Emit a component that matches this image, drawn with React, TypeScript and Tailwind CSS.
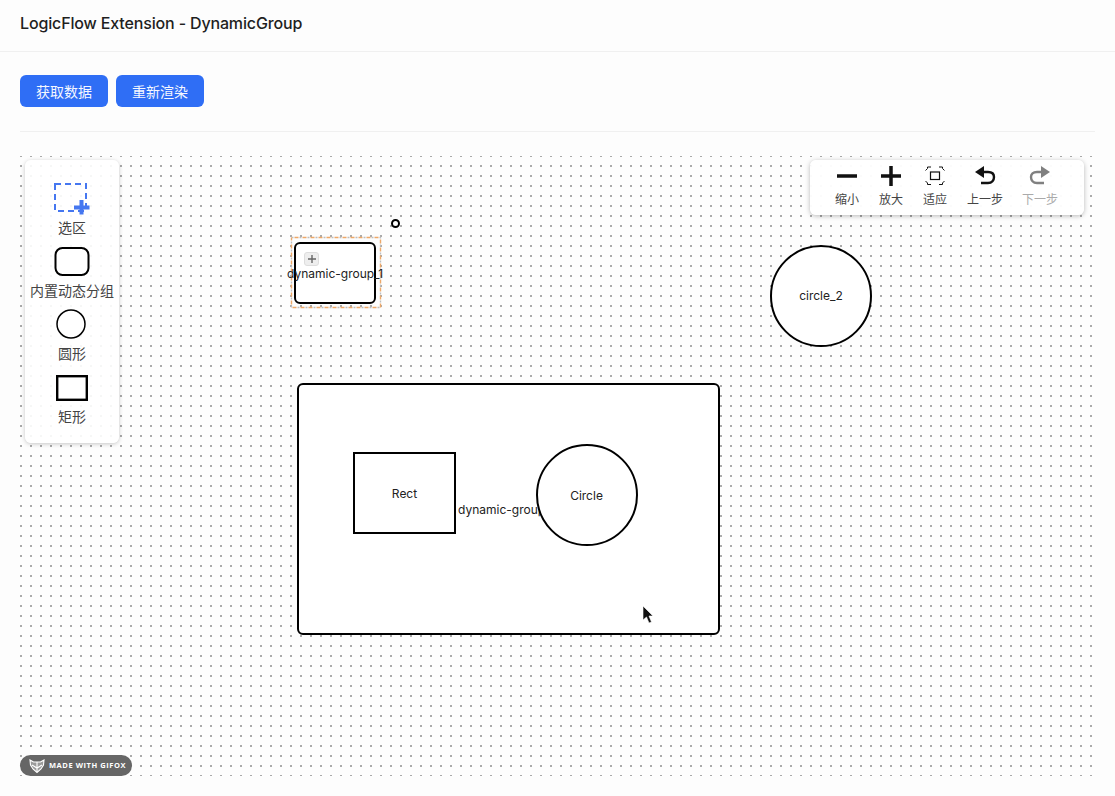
import React from "react";

const sans = "font-['Inter','Noto_Sans_CJK_SC',sans-serif]";

function ToolItem({ label, icon, muted }: { label: string; icon: React.ReactNode; muted?: boolean }) {
  return (
    <div className={`flex flex-col items-center w-[44px] ${muted ? "text-[#aaa]" : "text-[#444]"}`}>
      <div className="h-[24px] flex items-center justify-center">{icon}</div>
      <span className="text-[12px] leading-[16px] mt-[4px] whitespace-nowrap">{label}</span>
    </div>
  );
}

function DndItem({ label, icon }: { label: string; icon: React.ReactNode }) {
  return (
    <div className="flex flex-col items-center h-[63px]">
      <div className="h-[32px] flex items-center justify-center">{icon}</div>
      <span className="text-[14px] leading-[18px] mt-[5px] text-[#444] whitespace-nowrap">{label}</span>
    </div>
  );
}

export default function App() {
  return (
    <div className={`${sans} w-[1115px] h-[796px] bg-[#fdfdfd] overflow-hidden text-[#111]`}>
      <header className="h-[52px] border-b border-[#f0f0f0] px-[20px] flex items-center">
        <h1 className="text-[16px] font-medium tracking-[-0.15px] text-[#1f1f1f] -mt-[6px]">LogicFlow Extension - DynamicGroup</h1>
      </header>
      <main className="px-[20px]">
        <div className="flex gap-[8px] pt-[23px] pb-[24px] border-b border-[#f0f0f0]">
          <button className="w-[88px] h-[32px] rounded-[6px] bg-[#2f6ef5] text-[#f4f7ff] text-[14px]">获取数据</button>
          <button className="w-[88px] h-[32px] rounded-[6px] bg-[#2f6ef5] text-[#f4f7ff] text-[14px]">重新渲染</button>
        </div>
        <div className="relative mt-[24px] h-[620px] w-[1075px] bg-[radial-gradient(circle,#aaa_1px,transparent_1px)] bg-[length:10px_10px] bg-[position:-4px_-5px]">
          {/* dnd panel */}
          <div className="absolute left-[5px] top-[4px] w-[94px] h-[283px] bg-white/90 rounded-[6px] shadow-[0_1px_4px_rgba(0,0,0,0.22)] pt-[22px] flex flex-col">
            <DndItem
              label="选区"
              icon={
                <svg width="38" height="32" viewBox="0 0 38 32" className="overflow-visible -ml-[1px] mt-[1px]">
                  <rect x="2" y="1" width="31" height="27" fill="none" stroke="#4577f0" strokeWidth="2" strokeDasharray="6 4" />
                  <path d="M28.5 17v14.5M21 24.5h15.5" stroke="#4577f0" strokeWidth="4" />
                </svg>
              }
            />
            <DndItem
              label="内置动态分组"
              icon={
                <svg width="36" height="30" viewBox="0 0 36 30" className="mt-[1px]">
                  <rect x="1.5" y="1" width="33" height="27" rx="7" fill="white" stroke="#000" strokeWidth="2" />
                </svg>
              }
            />
            <DndItem
              label="圆形"
              icon={
                <svg width="30" height="30" viewBox="0 0 30 30" className="-ml-[2px]">
                  <circle cx="15" cy="15" r="14" fill="white" stroke="#000" strokeWidth="1.5" />
                </svg>
              }
            />
            <DndItem
              label="矩形"
              icon={
                <svg width="32" height="26" viewBox="0 0 32 26" className="mt-[1px]">
                  <rect x="1.2" y="1.2" width="29.6" height="23.6" fill="white" stroke="#000" strokeWidth="2.4" />
                </svg>
              }
            />
          </div>

          {/* control */}
          <div className="absolute left-[790px] top-[4px] w-[274px] h-[55px] bg-white/95 rounded-[6px] shadow-[0_1px_5px_rgba(0,0,0,0.28)] flex pl-[15px] pt-[4px]">
            <ToolItem
              label="缩小"
              icon={
                <svg width="22" height="22" viewBox="0 0 22 22">
                  <path d="M1 11h20" stroke="#111" strokeWidth="3.5" />
                </svg>
              }
            />
            <ToolItem
              label="放大"
              icon={
                <svg width="22" height="22" viewBox="0 0 22 22">
                  <path d="M1 11h20M11 1v20" stroke="#111" strokeWidth="3.5" />
                </svg>
              }
            />
            <ToolItem
              label="适应"
              icon={
                <svg width="20" height="20" viewBox="0 0 20 20" fill="none" stroke="#111" strokeWidth="1">
                  <path d="M0.5 4.5l2-2V1H6M14 1h3.5v1.5l2 2M19.5 15l-2 2v1.5H14M6 18.5H2.5V17l-2-2" />
                  <rect x="5.5" y="6" width="9" height="7.5" strokeWidth="1.2" />
                </svg>
              }
            />
            <div className="w-[6px]" />
            <ToolItem
              label="上一步"
              icon={
                <svg width="22" height="22" viewBox="0 0 22 22" fill="none" className="-mt-[1px]">
                  <path d="M1 7l9-6v12z" fill="#111" />
                  <path d="M9 7h5c4 0 6 2 6 5s-2 6-6 6H7" stroke="#111" strokeWidth="2.4" />
                </svg>
              }
            />
            <div className="w-[11px]" />
            <ToolItem
              muted
              label="下一步"
              icon={
                <svg width="22" height="22" viewBox="0 0 22 22" fill="none" className="-mt-[1px]">
                  <path d="M21 7l-9-6v12z" fill="#808080" />
                  <path d="M13 7H8c-4 0-6 2-6 5s2 6 6 6h7" stroke="#808080" strokeWidth="2.4" />
                </svg>
              }
            />
          </div>

          {/* small selected dynamic group */}
          <svg className="absolute left-[270px] top-[80px]" width="92" height="73" viewBox="0 0 92 73" fill="none">
            <rect x="1.5" y="1.5" width="89" height="70" stroke="#bdbdbd" strokeWidth="1.3" strokeDasharray="2 6" />
            <rect x="1.5" y="1.5" width="89" height="70" stroke="#eda868" strokeWidth="1.4" strokeDasharray="4 4" strokeDashoffset="5" />
          </svg>
          <div className="absolute left-[274px] top-[86px] w-[82px] h-[62px] bg-white border-2 border-black rounded-[6px]" />
          <div className="absolute left-[284px] top-[96px] w-[15px] h-[14px] rounded-[3px] bg-[#eee] border border-[#ddd] flex items-center justify-center">
            <svg width="10" height="10" viewBox="0 0 10 10">
              <path d="M1 5h8M5 1v8" stroke="#666" strokeWidth="1.4" />
            </svg>
          </div>
          <span className="absolute left-[267px] top-[110px] text-[12px] leading-[16px] whitespace-nowrap text-[#222]">dynamic-group_1</span>
          <div className="absolute left-[371px] top-[63px] w-[9px] h-[9px] rounded-full bg-white border-2 border-black" />

          {/* circle 2 */}
          <div className="absolute left-[750px] top-[89px] w-[102px] h-[102px] rounded-full bg-white border-2 border-black flex items-center justify-center text-[12px] text-[#222]">circle_2</div>

          {/* large dynamic group */}
          <div className="absolute left-[277px] top-[227px] w-[423px] h-[252px] bg-white border-2 border-black rounded-[6px]" />
          <span className="absolute left-[438px] top-[346px] text-[12px] leading-[16px] whitespace-nowrap text-[#222]">dynamic-group_1</span>
          <div className="absolute left-[333px] top-[296px] w-[103px] h-[82px] bg-white border-2 border-black flex items-center justify-center text-[12px] text-[#222] pt-[2px]">Rect</div>
          <div className="absolute left-[515.5px] top-[288px] w-[102px] h-[102px] rounded-full bg-white border-2 border-black flex items-center justify-center text-[12px] text-[#222] pt-[2px]">Circle</div>

          {/* cursor */}
          <svg className="absolute left-[622px] top-[449px]" width="12" height="19" viewBox="0 0 12 19">
            <path d="M1 1v14l3.5-3 2.5 6 2.5-1-2.5-6H11z" fill="#111" stroke="#fff" strokeWidth="0.6" />
          </svg>

          {/* watermark */}
          <div className="absolute left-0 top-[599px] w-[112px] h-[21px] rounded-full bg-[#666] flex items-center pl-[9px] gap-[4px]">
            <svg width="16" height="14" viewBox="0 0 16 14" fill="none" stroke="#fff" strokeWidth="1.1">
              <path d="M1 1l3.5 2h7L15 1l-.5 5L12 10l-4 3.5L4 10 1.5 6z" fill="#fff" fillOpacity="0.35" />
              <path d="M3 6l5 3 5-3M8 3v10" />
            </svg>
            <span className="font-['Open_Sans',sans-serif] text-[7.5px] font-bold tracking-[0.55px] text-white whitespace-nowrap">MADE WITH GIFOX</span>
          </div>
        </div>
      </main>
    </div>
  );
}
